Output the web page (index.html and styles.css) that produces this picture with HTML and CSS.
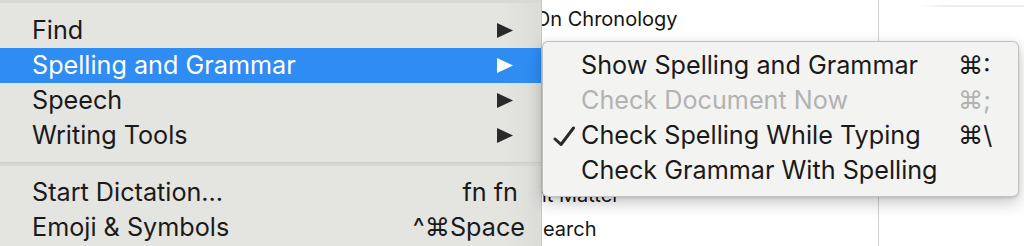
FILE: index.html
```html
<!DOCTYPE html>
<html lang="en">
<head>
<meta charset="utf-8">
<title>Spelling and Grammar menu</title>
<link rel="stylesheet" href="styles.css">
</head>
<body>
<div class="screen">
  <div class="doc">
    <div class="doc-gutter"></div>
    <div class="doc-col">
      <div class="doc-line line-first">On Chronology</div>
      <div class="doc-line line-mid">nt Matter</div>
      <div class="doc-line line-last">earch</div>
    </div>
    <div class="doc-side"><div class="side-rule"></div></div>
  </div>

  <div class="menu main-menu">
    <div class="top-strip"></div>
    <div class="items">
      <div class="item">
        <span class="label">Find</span>
        <svg class="arrow" viewBox="0 0 16 15" width="16" height="15"><path d="M0 0 L16 7.5 L0 15 Z"/></svg>
      </div>
      <div class="item selected">
        <span class="label">Spelling and Grammar</span>
        <svg class="arrow" viewBox="0 0 16 15" width="16" height="15"><path d="M0 0 L16 7.5 L0 15 Z"/></svg>
      </div>
      <div class="item">
        <span class="label">Speech</span>
        <svg class="arrow" viewBox="0 0 16 15" width="16" height="15"><path d="M0 0 L16 7.5 L0 15 Z"/></svg>
      </div>
      <div class="item">
        <span class="label">Writing Tools</span>
        <svg class="arrow" viewBox="0 0 16 15" width="16" height="15"><path d="M0 0 L16 7.5 L0 15 Z"/></svg>
      </div>
      <div class="separator"></div>
      <div class="item shortcut-item">
        <span class="label">Start Dictation…</span>
        <span class="key key-fn">fn fn</span>
      </div>
      <div class="item shortcut-item">
        <span class="label">Emoji &amp; Symbols</span>
        <span class="key">^⌘Space</span>
      </div>
    </div>
  </div>

  <div class="menu sub-menu">
    <div class="sub-item">
      <span class="check"></span>
      <span class="label">Show Spelling and Grammar</span>
      <span class="key">⌘:</span>
    </div>
    <div class="sub-item disabled">
      <span class="check"></span>
      <span class="label">Check Document Now</span>
      <span class="key">⌘;</span>
    </div>
    <div class="sub-item">
      <span class="check"><svg viewBox="0 0 22 20" width="22" height="20"><path d="M2 13 L8 18.5 L20.5 2" /></svg></span>
      <span class="label">Check Spelling While Typing</span>
      <span class="key">⌘\</span>
    </div>
    <div class="sub-item">
      <span class="check"></span>
      <span class="label">Check Grammar With Spelling</span>
      <span class="key"></span>
    </div>
  </div>
</div>
</body>
</html>
```

FILE: styles.css
```css
* { box-sizing: border-box; }

html, body {
  margin: 0;
  padding: 0;
  background: #ffffff;
}

body {
  font-family: Inter, "Helvetica Neue", "Liberation Sans", Arial, sans-serif;
  color: #1a1a1a;
  width: 1024px;
  height: 246px;
  overflow: hidden;
}

.screen {
  position: relative;
  width: 1024px;
  height: 246px;
  overflow: hidden;
}

/* ---------- background document ---------- */
.doc {
  display: flex;
  height: 246px;
}

.doc-gutter {
  width: 535px;
  flex: none;
}

.doc-col {
  width: 344px;
  flex: none;
  border-right: 1px solid #cfcfcf;
  font-size: 20px;
  line-height: 24px;
  color: #141414;
}

.doc-line { white-space: nowrap; }
.line-first { margin-top: 7px; }
.line-mid { margin-top: 152px; }
.line-last { margin-top: 10px; padding-left: 8px; }

.doc-side {
  flex: 1;
  padding-top: 5px;
}

.side-rule {
  height: 2px;
  margin-left: 40px;
  background: linear-gradient(to right, rgba(230,230,230,0), #ededed 25%, #ececec);
}

/* ---------- menus ---------- */
.menu {
  position: absolute;
}

.main-menu {
  left: 0;
  top: 0;
  width: 542px;
  height: 246px;
  background: linear-gradient(to right, #e4e4e0 0%, #e4e4e0 93%, #dcdcd8 99.5%);
  border-right: 1px solid #c7c7c4;
  font-size: 25.2px;
}

.top-strip {
  height: 3px;
  background: #d8d8d4;
}

.items {
  padding-top: 10px;
}

.item {
  height: 35px;
  display: flex;
  align-items: center;
  justify-content: space-between;
  padding: 0 28px 0 32px;
  white-space: nowrap;
}

.item .label { line-height: 35px; }

.arrow { fill: #2a2a2a; display: block; }

.item.selected {
  background: #2e8cf2;
  color: #ffffff;
}

.item.selected .arrow { fill: #ffffff; }

.shortcut-item { padding-right: 16px; }

.key { line-height: 35px; }
.key-fn { margin-right: 7px; }

.separator {
  height: 22px;
  padding-top: 9px;
}

.separator::before {
  content: "";
  display: block;
  height: 3px;
  background: #d5d5d1;
  border-top: 1px solid #cdcdc9;
}

/* ---------- submenu ---------- */
.sub-menu {
  left: 542px;
  top: 41px;
  width: 477px;
  height: 156px;
  padding-top: 6px;
  background: #f3f3f2;
  border: 1px solid rgba(0, 0, 0, 0.2);
  border-radius: 6px;
  box-shadow: 0 6px 16px rgba(0, 0, 0, 0.22), 0 1px 3px rgba(0, 0, 0, 0.12);
  font-size: 25.2px;
}

.sub-item {
  display: grid;
  grid-template-columns: 38px 1fr 60px;
  align-items: center;
  height: 35px;
  white-space: nowrap;
}

.sub-item .label, .sub-item .key { line-height: 35px; }

.sub-item.disabled { color: #b2b2b2; }

.check {
  display: flex;
  justify-content: flex-end;
  padding-right: 6px;
}

.check svg {
  display: block;
  fill: none;
  stroke: #2a2a2a;
  stroke-width: 3;
  stroke-linecap: round;
  stroke-linejoin: round;
}
```
